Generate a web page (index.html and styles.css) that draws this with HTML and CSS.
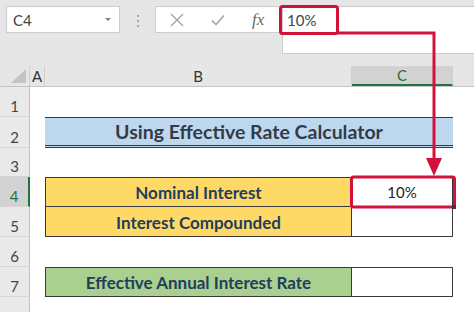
FILE: index.html
```html
<!DOCTYPE html>
<html lang="en">
<head>
    <meta charset="UTF-8">
    <meta name="viewport" content="width=device-width, initial-scale=1.0">
    <title>Effective Rate Calculator</title>
    <link rel="stylesheet" href="styles.css">
</head>
<body>
    <div class="sheet">
        <div class="toolbar">
            <div class="name-box">
                <span>C4</span>
                <span class="caret"></span>
            </div>
            <div class="grip"><i></i><i></i><i></i></div>
            <div class="formula">
                <div class="formula-buttons">
                    <svg class="btn-icon" width="14" height="14" viewBox="0 0 14 14">
                        <path d="M1 1 L13 13 M13 1 L1 13" stroke="#a6a6a6" stroke-width="1.4" fill="none"/>
                    </svg>
                    <svg class="btn-icon" width="14" height="12" viewBox="0 0 14 12">
                        <path d="M1 6.5 L5 10.5 L13 1.5" stroke="#a6a6a6" stroke-width="1.6" fill="none"/>
                    </svg>
                    <span class="fx">fx</span>
                </div>
                <div class="formula-input">10%</div>
            </div>
        </div>

        <div class="row col-heads">
            <div class="corner"><span></span></div>
            <div class="ch">A</div>
            <div class="ch">B</div>
            <div class="ch active">C</div>
            <div></div>
        </div>

        <div class="row r1"><div class="rh">1</div></div>
        <div class="row r2">
            <div class="rh">2</div>
            <div></div>
            <div class="title">Using Effective Rate Calculator</div>
        </div>
        <div class="row r3"><div class="rh">3</div></div>
        <div class="row r4">
            <div class="rh active">4</div>
            <div></div>
            <div class="cell label yellow">Nominal Interest</div>
            <div class="cell value">10%</div>
        </div>
        <div class="row r5">
            <div class="rh">5</div>
            <div></div>
            <div class="cell label yellow joined">Interest Compounded</div>
            <div class="cell value joined"></div>
        </div>
        <div class="row r6"><div class="rh">6</div></div>
        <div class="row r7">
            <div class="rh">7</div>
            <div></div>
            <div class="cell label green">Effective Annual Interest Rate</div>
            <div class="cell value"></div>
        </div>
        <div class="row r8"><div class="rh"></div></div>

        <!-- red callout from the formula bar down to C4 -->
        <svg class="callout" width="474" height="312" viewBox="0 0 474 312">
            <rect x="280.5" y="6.5" width="57" height="27" rx="2" fill="none" stroke="#d3123c" stroke-width="3"/>
            <path d="M338 33 H434 V160" fill="none" stroke="#d3123c" stroke-width="3"/>
            <polygon points="426,158 442,158 434,176" fill="#d3123c"/>
            <rect x="351.5" y="177" width="103" height="30" rx="2" fill="none" stroke="#d3123c" stroke-width="3"/>
            <rect x="452" y="205" width="4" height="4" fill="#3a3a3a"/>
        </svg>
    </div>
</body>
</html>
```

FILE: styles.css
```css
body {
    margin: 0;
    padding: 0;
    background-color: #ffffff;
    font-family: Lato, "Noto Sans", sans-serif;
    color: #444;
}
.sheet {
    position: relative;
    width: 474px;
    height: 312px;
    overflow: hidden;
    background-color: #ffffff;
}
.toolbar {
    display: flex;
    align-items: flex-start;
    box-sizing: border-box;
    height: 66px;
    padding: 6px 0 0 6px;
    background-color: #e6e6e6;
}
.name-box {
    display: flex;
    align-items: center;
    justify-content: space-between;
    box-sizing: border-box;
    width: 114px;
    height: 27px;
    padding: 0 8px 0 6px;
    background-color: #ffffff;
    border: 1px solid #cdcdcd;
    font-size: 15px;
    color: #444;
}
.caret {
    width: 0;
    height: 0;
    border-left: 3px solid transparent;
    border-right: 3px solid transparent;
    border-top: 3px solid #808080;
}
.grip {
    display: flex;
    flex-direction: column;
    align-items: center;
    gap: 3px;
    width: 35px;
    padding-top: 9px;
}
.grip i {
    width: 2px;
    height: 2px;
    background-color: #a8a8a8;
}
.formula {
    display: flex;
    flex: 1;
}
.formula-buttons {
    display: flex;
    align-items: center;
    box-sizing: border-box;
    width: 127px;
    height: 27px;
    padding-left: 14px;
    background-color: #ffffff;
    border: 1px solid #cdcdcd;
    border-right: none;
}
.btn-icon {
    margin-right: 27px;
}
.fx {
    font-family: "Liberation Serif", serif;
    font-style: italic;
    font-size: 17px;
    color: #6a6a6a;
}
.formula-input {
    flex: 1;
    box-sizing: border-box;
    height: 48px;
    padding: 4px 0 0 4px;
    background-color: #ffffff;
    border: 1px solid #cdcdcd;
    border-right: none;
    font-size: 15px;
    color: #444;
}
.row {
    display: grid;
    grid-template-columns: 30px 15px 307px 101px 1fr;
    height: 30px;
}
.col-heads {
    box-sizing: border-box;
    height: 21px;
    background-color: #e6e6e6;
    border-bottom: 1px solid #c4c4c4;
    font-size: 15px;
}
.corner {
    position: relative;
    border-right: 1px solid #d0d0d0;
}
.corner span {
    position: absolute;
    right: 3px;
    bottom: 3px;
    width: 0;
    height: 0;
    border-left: 15px solid transparent;
    border-bottom: 14px solid #c4c4c4;
}
.ch {
    display: flex;
    align-items: center;
    justify-content: center;
    border-right: 1px solid #d0d0d0;
    color: #333;
}
.ch.active {
    background-color: #d2d2d2;
    border-bottom: 2px solid #217346;
    color: #217346;
}
.rh {
    display: flex;
    align-items: flex-end;
    justify-content: center;
    box-sizing: border-box;
    padding-bottom: 1px;
    background-color: #e9e9e9;
    border-right: 1px solid #c4c4c4;
    border-bottom: 1px solid #d4d4d4;
    font-size: 15px;
    color: #444;
}
.rh.active {
    background-color: #d2d2d2;
    border-right: 2px solid #217346;
    color: #217346;
}
.r2 {
    height: 31px;
}
.r3 {
    height: 29px;
}
.r8 {
    height: 20px;
}
.title {
    grid-column: 3 / 5;
    display: flex;
    align-items: center;
    justify-content: center;
    box-sizing: border-box;
    background-color: #bdd7ee;
    border-top: 1px solid #3a3a3a;
    border-bottom: 3px double #3a3a3a;
    font-size: 19.5px;
    font-weight: bold;
    color: #333b47;
}
.cell {
    display: flex;
    align-items: center;
    justify-content: center;
    box-sizing: border-box;
    border: 1px solid #3a3a3a;
}
.cell.joined {
    border-top: none;
}
.label {
    font-size: 17px;
    font-weight: bold;
    color: #1f3d60;
    padding-top: 1px;
}
.yellow {
    background-color: #ffd966;
}
.green {
    background-color: #a9d08e;
}
.value {
    border-left: none;
    background-color: #ffffff;
    font-size: 15px;
    color: #222;
}
.callout {
    position: absolute;
    top: 0;
    left: 0;
    pointer-events: none;
}
```
